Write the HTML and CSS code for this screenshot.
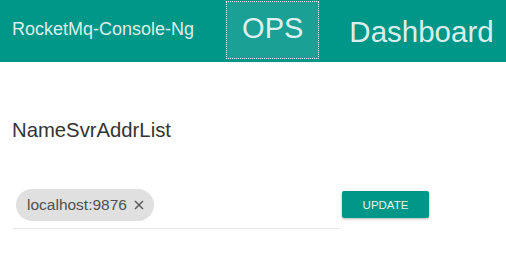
FILE: index.html
```html
<!DOCTYPE html>
<html>
<head>
<meta charset="utf-8">
<link rel="stylesheet" href="styles.css">
</head>
<body>
<header class="topbar">
  <div class="brand">RocketMq-Console-Ng</div>
  <div class="nav-item nav-active">OPS</div>
  <div class="nav-item nav-dash">Dashboard</div>
</header>
<main class="content">
  <h2 class="title">NameSvrAddrList</h2>
  <div class="row">
    <div class="field">
      <span class="chip">
        <span class="chip-text">localhost:9876</span>
        <svg class="chip-x" width="10" height="10" viewBox="0 0 10 10"><path d="M1 1L9 9M9 1L1 9" stroke="#5a5a5a" stroke-width="1.5" fill="none"/></svg>
      </span>
    </div>
    <button class="btn">UPDATE</button>
  </div>
</main>
</body>
</html>
```
FILE: styles.css
```css
html, body {
  margin: 0;
  padding: 0;
  background: #ffffff;
  font-family: "Liberation Sans", Arial, sans-serif;
}
.topbar {
  height: 62px;
  background: #009688;
  display: flex;
  align-items: flex-start;
  color: rgba(255, 255, 255, 0.87);
}
.brand {
  margin-left: 12px;
  padding-top: 19px;
  font-size: 18px;
  line-height: 20px;
}
.nav-item {
  box-sizing: border-box;
}
.nav-active {
  margin-left: 32px;
  margin-top: 1px;
  height: 58px;
  padding: 12px 15px 0 15px;
  border: 1px dotted rgba(255, 255, 255, 0.9);
  background: rgba(255, 255, 255, 0.1);
  font-size: 29px;
  line-height: 29px;
}
.nav-dash {
  margin-left: 30px;
  padding-top: 17px;
  font-size: 29.5px;
  line-height: 29px;
}
.content {
  padding-left: 12px;
}
.title {
  margin: 56px 0 0 0;
  font-size: 20.3px;
  line-height: 24px;
  font-weight: normal;
  color: #333333;
}
.row {
  display: flex;
  align-items: flex-start;
  margin-top: 47px;
}
.field {
  margin-left: 1px;
  width: 327px;
  box-sizing: border-box;
  padding: 0 0 7px 3px;
  border-bottom: 1px solid #e6e6e6;
}
.chip {
  display: inline-flex;
  align-items: center;
  height: 32px;
  box-sizing: border-box;
  padding: 0 10px 0 11px;
  border-radius: 16px;
  background: #e0e0e0;
  color: #505050;
  font-size: 15.5px;
}
.chip-text {
  line-height: 18px;
}
.chip-x {
  margin-left: 7px;
  display: block;
}
.btn {
  margin: 2px 0 0 2px;
  width: 87px;
  height: 27px;
  padding: 0;
  border: none;
  border-radius: 2px;
  background: #009688;
  color: rgba(255, 255, 255, 0.92);
  font-family: "Liberation Sans", Arial, sans-serif;
  font-size: 11.5px;
  box-shadow: 0 1px 3px rgba(0, 0, 0, 0.3);
}
```
